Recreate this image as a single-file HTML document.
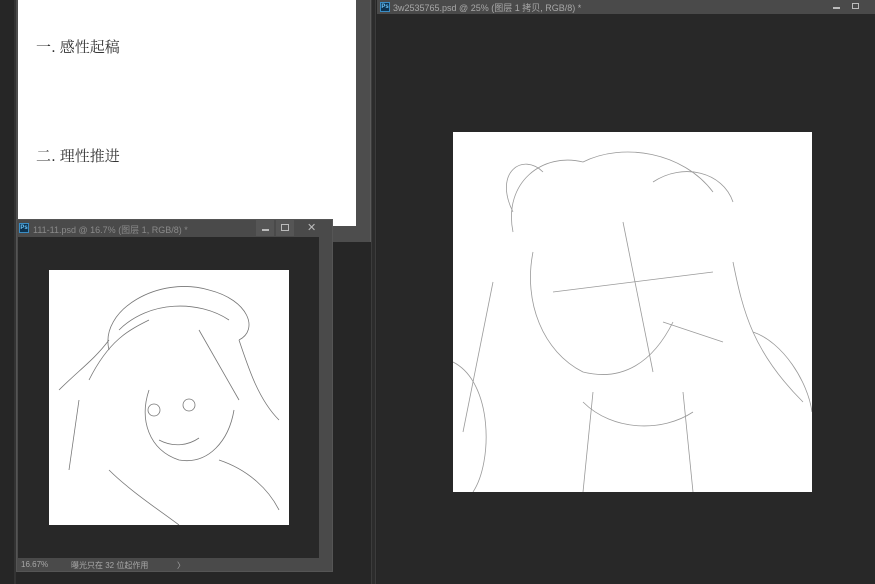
<!DOCTYPE html>
<html><head><meta charset="utf-8"><style>
body{margin:0;width:875px;height:584px;background:#262626;position:relative;overflow:hidden;font-family:"Liberation Sans","Noto Sans CJK SC",sans-serif}
div{position:absolute;box-sizing:border-box}
.t{color:#a8a8a8;font-size:9px;white-space:nowrap}
.ps{width:10px;height:10px;background:#0d3350;border:1px solid #3a8dc5;color:#6cc2f5;font-size:6px;line-height:8px;text-align:center;font-weight:bold}
</style></head><body>
<div style="left:14px;top:0;width:2px;height:584px;background:#333"></div>
<!-- top-left doc -->
<div style="left:16px;top:0;width:355px;height:242px;background:#4d4d4d;border-right:1px solid #5a5a5a"></div>
<div style="left:18px;top:0;width:338px;height:226px;background:#fff"></div>
<div style="left:36px;top:36px;font-family:'Noto Serif CJK SC',serif;font-size:15px;color:#333">一. 感性起稿</div>
<div style="left:36px;top:145px;font-family:'Noto Serif CJK SC',serif;font-size:15px;color:#333">二. 理性推进</div>
<!-- separator -->
<div style="left:371px;top:0;width:5px;height:584px;background:#2c2c2c;border-left:1px solid #3c3c3c;border-right:1px solid #3c3c3c"></div>
<!-- small window -->
<div style="left:16px;top:219px;width:317px;height:353px;background:#4a4a4a;border:1px solid #555"></div>
<div style="left:19px;top:223px" class="ps">Ps</div>
<div class="t" style="left:33px;top:223px;color:#8a8a8a">111-11.psd @ 16.7% (图层 1, RGB/8) *</div>
<div style="left:256px;top:220px;width:18px;height:16px;background:#555"></div>
<div style="left:262px;top:229px;width:7px;height:2px;background:#bbb"></div>
<div style="left:276px;top:220px;width:18px;height:16px;background:#555"></div>
<div style="left:281px;top:224px;width:8px;height:7px;border:1px solid #bbb"></div>
<div class="t" style="left:307px;top:221px;font-size:11px;color:#bbb">✕</div>
<div style="left:18px;top:237px;width:301px;height:321px;background:#282828"></div>
<div style="left:49px;top:270px;width:240px;height:255px;background:#fff"></div>
<svg style="position:absolute;left:49px;top:270px" width="240" height="255" fill="none" stroke="#777" stroke-width="0.8">
<path d="M60 80 C50 40 110 5 160 20 C200 30 210 60 190 70"/><path d="M70 60 C100 30 150 30 180 50"/><path d="M40 110 C60 70 80 60 100 50"/><path d="M10 120 C30 100 45 90 60 70"/><path d="M100 120 C90 150 100 180 130 190 C160 195 180 170 185 140"/><path d="M110 170 C125 178 140 175 150 168"/><circle cx="105" cy="140" r="6"/><circle cx="140" cy="135" r="6"/><path d="M190 70 C200 100 210 130 230 150"/><path d="M60 200 C80 220 110 240 130 255"/><path d="M150 60 L190 130"/><path d="M30 130 L20 200"/><path d="M170 190 C200 200 220 220 230 240"/></svg>
<div class="t" style="left:21px;top:560px;font-size:8px">16.67%</div>
<div class="t" style="left:71px;top:560px;font-size:8px">曝光只在 32 位起作用</div>
<div class="t" style="left:177px;top:560px;font-size:8px">〉</div>
<!-- right window -->
<div style="left:377px;top:0;width:498px;height:14px;background:#4a4a4a"></div>
<div style="left:380px;top:2px" class="ps">Ps</div>
<div class="t" style="left:393px;top:1px">3w2535765.psd @ 25% (图层 1 拷贝, RGB/8) *</div>
<div style="left:833px;top:7px;width:7px;height:2px;background:#bbb"></div>
<div style="left:852px;top:3px;width:7px;height:6px;border:1px solid #bbb"></div>
<div style="left:377px;top:14px;width:498px;height:570px;background:#282828"></div>
<div style="left:453px;top:132px;width:359px;height:360px;background:#fff"></div>
<svg style="position:absolute;left:453px;top:132px" width="359" height="360" fill="none" stroke="#999" stroke-width="0.8">
<path d="M60 100 C50 50 90 20 130 30 C170 10 230 20 260 60"/><path d="M80 120 C70 170 90 220 130 240 C170 250 200 230 220 190"/><path d="M100 160 L260 140"/><path d="M170 90 L200 240"/><path d="M210 190 L270 210"/><path d="M40 150 C30 200 20 250 10 300"/><path d="M280 130 C290 180 300 220 350 270"/><path d="M0 230 C40 250 40 330 20 360"/><path d="M130 270 C160 300 210 300 240 280"/><path d="M300 200 C330 210 355 250 359 280"/><path d="M60 80 C40 40 70 20 90 40"/><path d="M200 50 C230 30 270 40 280 70"/><path d="M140 260 L130 360"/><path d="M230 260 L240 360"/></svg>
</body></html>
